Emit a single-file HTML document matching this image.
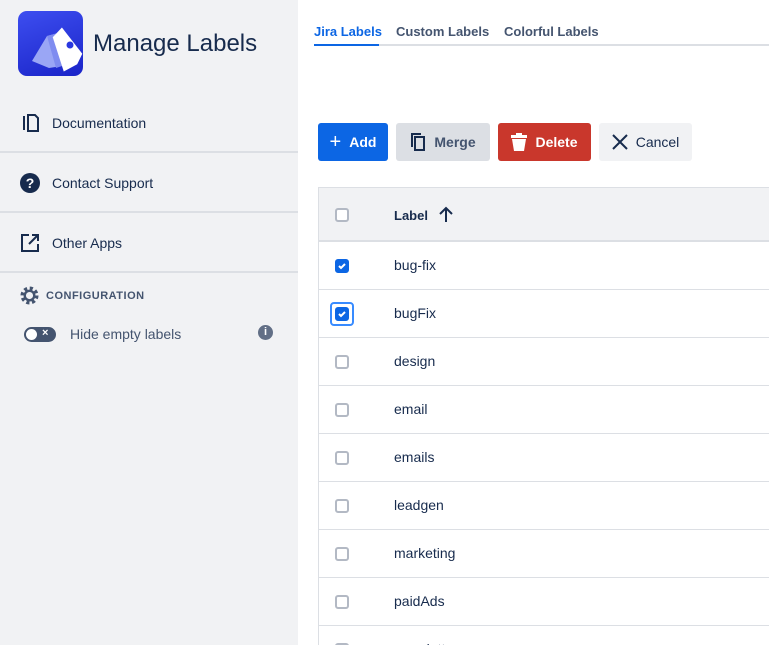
<!DOCTYPE html>
<html><head><meta charset="utf-8"><style>
*{box-sizing:border-box;margin:0;padding:0}
html,body{width:769px;height:645px;overflow:hidden}
body{font-family:"Liberation Sans",sans-serif;background:#fff;position:relative;color:#172b4d}
.side{position:absolute;left:0;top:0;width:298px;height:645px;background:#f1f2f4}
.logo{position:absolute;left:18px;top:11px;width:65px;height:65px;border-radius:9px;background:linear-gradient(160deg,#3d4ef0,#1a24c8);overflow:hidden}
.title{position:absolute;left:93px;top:30px;font-size:24px;color:#172b4d}
.nav{position:absolute;left:0;width:298px;height:60px;border-bottom:2px solid #dcdfe4;font-size:14px}
.nav span{position:absolute;left:52px;top:22px}
.nav svg{position:absolute;left:20px;top:20px}
.cfg{position:absolute;left:46px;top:290px;font-size:11px;letter-spacing:.5px;color:#44546f;font-weight:bold}
.tabs{position:absolute;left:314px;top:24px;font-size:13px;font-weight:bold;color:#44546f}
.tabs span{position:absolute;top:0;white-space:nowrap}
.btn{position:absolute;top:123px;height:38px;border-radius:3px;font-size:14px;font-weight:bold;display:flex;align-items:center;justify-content:center;gap:8px}
.wrap{position:absolute;left:318px;top:187px;width:460px;height:458px;overflow:hidden}
.tbl{border-left:1px solid #dcdfe4;border-top:1px solid #dcdfe4}
.hd{height:54px;background:#f1f2f4;border-bottom:2px solid #dcdfe4;position:relative}
.row{height:48px;border-bottom:1px solid #dcdfe4;position:relative;font-size:14px}
.cb{position:absolute;left:16px;width:14px;height:14px;border:2px solid #b3b9c4;border-radius:3px;background:#fff}
.row .cb{top:17px}
.row span{position:absolute;left:75px;top:15px}
.ck{background:#0c66e4;border-color:#0c66e4}
</style></head><body>
<div class="side">
<div class="logo"><svg width="65" height="65" viewBox="0 0 65 65"><path d="M29 25 L40 22 L44 55 L31 57 L14 50Z" fill="#9aa6f5"/><path d="M29 25 L40 22 L44 55 L38 57Z" fill="#7f8cf0"/><path d="M36 25 L46 16 L64 44 L58 54 L44 60Z" fill="#fff" transform="rotate(-5 50 40)"/><circle cx="52" cy="34" r="3.5" fill="#2a38e0"/></svg></div>
<div class="title">Manage Labels</div>
<div class="nav" style="top:93px"><svg width="20" height="20" viewBox="0 0 20 20" fill="none" stroke="#172b4d" stroke-width="2"><path d="M4 3v14M8 2h7l3 3v13H8z"/></svg><span>Documentation</span></div>
<div class="nav" style="top:153px"><svg width="22" height="22" viewBox="0 0 22 22"><circle cx="10" cy="10" r="10" fill="#172b4d"/><text x="10" y="15" font-size="14" font-weight="bold" fill="#fff" text-anchor="middle" font-family="Liberation Sans">?</text></svg><span>Contact Support</span></div>
<div class="nav" style="top:213px"><svg width="20" height="20" viewBox="0 0 20 20" fill="none" stroke="#172b4d" stroke-width="2"><path d="M9 2H2v16h16v-7M12 2h6v6M18 2l-9 9"/></svg><span>Other Apps</span></div>
<svg style="position:absolute;left:20px;top:286px" width="19" height="19" viewBox="0 0 20 20"><circle cx="10" cy="10" r="7" fill="none" stroke="#44546f" stroke-width="5" stroke-dasharray="3 2.5"/><circle cx="10" cy="10" r="5" fill="none" stroke="#44546f" stroke-width="2.5"/></svg>
<div class="cfg">CONFIGURATION</div>
<div style="position:absolute;left:24px;top:327px;width:32px;height:15px;border-radius:8px;background:#44546f"><div style="position:absolute;left:2px;top:2px;width:11px;height:11px;border-radius:50%;background:#fff"></div><span style="position:absolute;left:18px;top:0px;color:#fff;font-size:11px;font-weight:bold">×</span></div>
<div style="position:absolute;left:70px;top:326px;font-size:14px;color:#44546f">Hide empty labels</div>
<div style="position:absolute;left:258px;top:325px;width:15px;height:15px;border-radius:50%;background:#626f86;color:#fff;font-size:11px;font-weight:bold;text-align:center;line-height:15px">i</div>
</div>
<div class="tabs"><span style="left:0;color:#0c66e4">Jira Labels</span><span style="left:82px">Custom Labels</span><span style="left:190px">Colorful Labels</span></div>
<div style="position:absolute;left:314px;top:44px;width:455px;height:2px;background:#dcdfe4"></div>
<div style="position:absolute;left:314px;top:44px;width:65px;height:2px;background:#0c66e4"></div>
<div class="btn" style="left:318px;width:70px;background:#0c66e4;color:#fff"><span style="font-size:20px;font-weight:normal">+</span>Add</div>
<div class="btn" style="left:396px;width:94px;background:#dcdfe4;color:#44546f"><svg width="16" height="18" viewBox="0 0 16 18" fill="none" stroke="#172b4d" stroke-width="2"><path d="M2 14V1h9"/><rect x="5" y="4" width="9" height="13"/></svg>Merge</div>
<div class="btn" style="left:498px;width:93px;background:#c9372c;color:#fff"><svg width="16" height="18" viewBox="0 0 16 18"><rect x="0" y="2" width="16" height="3" fill="#fff"/><rect x="5" y="0" width="6" height="3" fill="#fff"/><path d="M1 6h14l-2 12H3z" fill="#fff"/></svg>Delete</div>
<div class="btn" style="left:599px;width:93px;background:#f1f2f4;color:#172b4d;font-weight:normal"><svg width="16" height="16" viewBox="0 0 16 16" stroke="#172b4d" stroke-width="2"><path d="M1 1l14 14M15 1L1 15"/></svg>Cancel</div>
<div class="wrap"><div class="tbl">
<div class="hd"><div class="cb" style="top:20px"></div><span style="position:absolute;left:75px;top:20px;font-size:13px;font-weight:bold">Label</span><svg style="position:absolute;left:120px;top:18px" width="14" height="16" viewBox="0 0 14 16" fill="none" stroke="#172b4d" stroke-width="2"><path d="M7 16V2M1 8l6-6 6 6"/></svg></div>
<div class="row"><div class="cb ck"><svg width="10" height="10" viewBox="0 0 10 10" style="position:absolute;left:0;top:0"><path d="M2 5l2 2 4-4" stroke="#fff" stroke-width="2" fill="none"/></svg></div><span>bug-fix</span></div>
<div class="row"><div style="position:absolute;left:11px;top:12px;width:24px;height:24px;border:2px solid #388bff;border-radius:4px"></div><div class="cb ck"><svg width="10" height="10" viewBox="0 0 10 10" style="position:absolute;left:0;top:0"><path d="M2 5l2 2 4-4" stroke="#fff" stroke-width="2" fill="none"/></svg></div><span>bugFix</span></div>
<div class="row"><div class="cb"></div><span>design</span></div>
<div class="row"><div class="cb"></div><span>email</span></div>
<div class="row"><div class="cb"></div><span>emails</span></div>
<div class="row"><div class="cb"></div><span>leadgen</span></div>
<div class="row"><div class="cb"></div><span>marketing</span></div>
<div class="row"><div class="cb"></div><span>paidAds</span></div>
<div class="row"><div class="cb"></div><span>newsletter</span></div>
</div></div>
</body></html>
